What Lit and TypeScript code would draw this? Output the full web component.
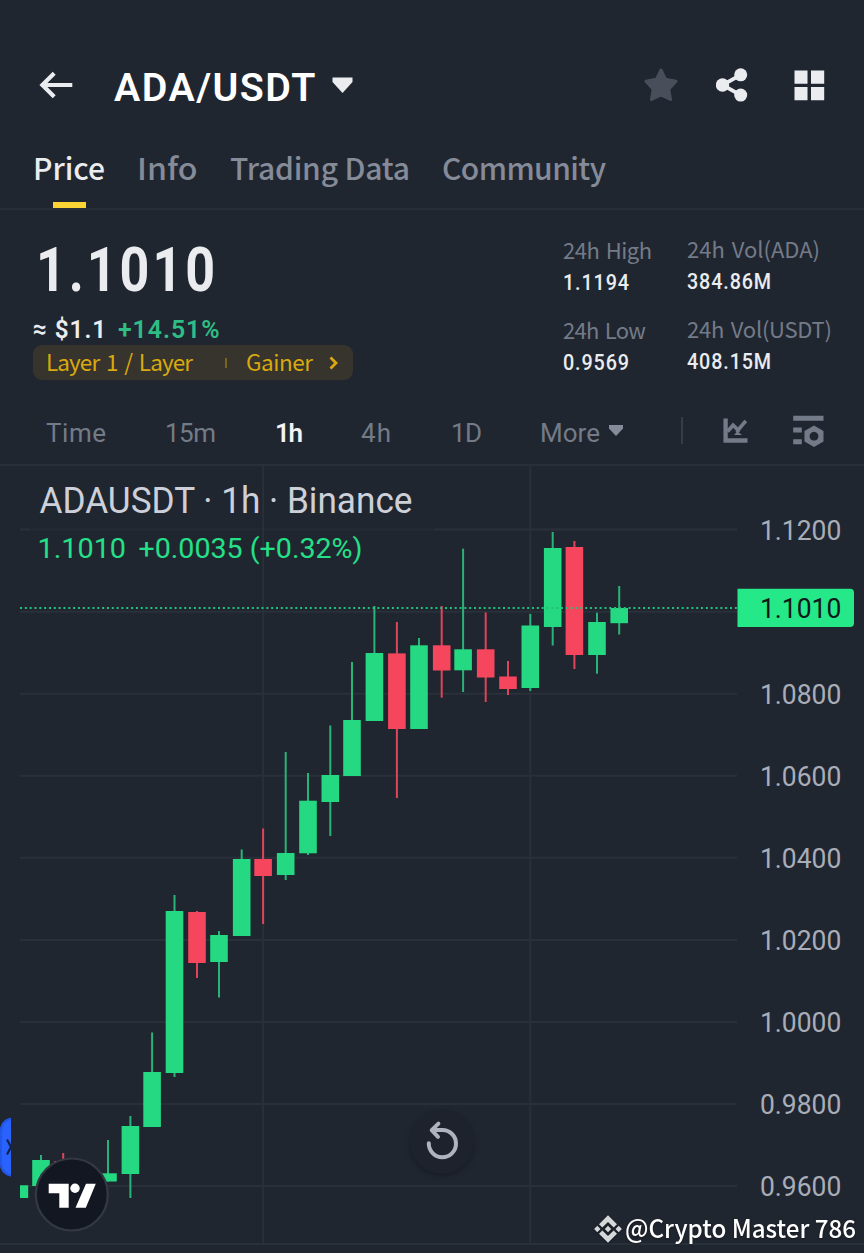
import { LitElement, html, svg, css } from "lit";
import { customElement, property } from "lit/decorators.js";

/** One line of text fitted to an exact advance width. */
@customElement("fit-text")
class FitText extends LitElement {
  @property() text = "";
  @property({ type: Number }) w = 100;
  @property({ type: Number }) h = 30;
  @property({ type: Number }) base = 24;
  @property({ type: Number }) size = 24;
  /** "spacing" keeps glyph shapes, "spacingAndGlyphs" scales them too. */
  @property() mode = "spacing";

  static styles = css`
    :host { display: block; flex: none; }
    svg { display: block; overflow: visible; }
    text { fill: currentColor; white-space: pre; }
  `;

  render() {
    return html`<svg width=${this.w} height=${this.h}>
      <text x="0" y=${this.base} font-size=${this.size} textLength=${this.w} lengthAdjust=${this.mode}>${this.text}</text>
    </svg>`;
  }
}

const UP = "#25d882";
const DOWN = "#f6465d";

// [centre x, body top, body bottom, wick top, wick bottom, falling]
const CANDLES: [number, number, number, number, number, number][] = [
  [19.4, 1185.3, 1198, 1185.3, 1198, 0],
  [41, 1160, 1186, 1155, 1186, 0],
  [63.2, 1161, 1176, 1153, 1180, 1],
  [108, 1173.3, 1181.5, 1140, 1181.5, 0],
  [130.4, 1126, 1174, 1116, 1198, 0],
  [152.1, 1072, 1127, 1032.5, 1127, 0],
  [174.5, 911, 1073, 895, 1077, 0],
  [197, 912, 963, 911, 978, 1],
  [219, 935, 962, 931, 997.5, 0],
  [241.7, 859, 936, 849.5, 936, 0],
  [263.1, 859, 876, 828.5, 924, 1],
  [285.7, 853, 875, 752, 880, 0],
  [308, 800.7, 853.3, 773, 855, 0],
  [330.3, 775, 802, 725.5, 836, 0],
  [352, 720, 776, 662, 776, 0],
  [374.4, 653, 721, 606, 721, 0],
  [396.9, 653.4, 729, 622, 798, 1],
  [419, 645.3, 729, 638, 729, 0],
  [441.7, 645.3, 670.5, 606, 697.7, 1],
  [463.1, 649.3, 670.3, 548.7, 692, 0],
  [485.7, 649.3, 677.5, 612.5, 702, 1],
  [508, 676.5, 689, 661, 695, 1],
  [530.3, 625.5, 688, 614, 691, 0],
  [552.7, 548, 627, 532, 645.5, 0],
  [574.4, 547, 655, 541, 669, 1],
  [597, 622, 655, 612.7, 673.7, 0],
  [619.2, 608, 623.2, 586, 634.5, 0],
];

const TICKS: [string, number][] = [
  ["1.1200", 529.5], ["", 611.7], ["1.0800", 693.8], ["1.0600", 775.8], ["1.0400", 857.8],
  ["1.0200", 940], ["1.0000", 1022], ["0.9800", 1104], ["0.9600", 1186],
];

@customElement("price-chart")
class PriceChart extends LitElement {
  static styles = css`
    :host { display: block; position: relative; height: 787px; }
    .plot { display: block; font-family: Roboto, sans-serif; }
    .grid { stroke: #2a3039; stroke-width: 2; }
    .soft { stroke: #242a34; }
    .title { fill: #cdd0d9; font-size: 36px; }
    .change { fill: #24e089; font-size: 28px; }
    .tick { fill: #a9adb8; font-size: 27px; }
    .now { fill: #10181c; font-size: 27px; }
    .dots { stroke: #25c07b; stroke-width: 2; stroke-dasharray: 2 2.83; }
    .overlay { position: absolute; display: block; }
    .drawer { left: 0; top: 651px; }
    .badge { left: 34px; top: 691px; }
    .reset {
      left: 410px; top: 644px; width: 64px; height: 64px; border-radius: 50%;
      background: #1e222c; box-shadow: 0 2px 5px rgba(10, 13, 22, 0.4);
    }
    .reset svg { display: block; }
    .mark {
      right: 8px; bottom: 7px; display: flex; align-items: center; gap: 3px; color: #fff;
      font-family: "Noto Sans CJK SC", sans-serif; font-weight: 500;
      filter: drop-shadow(0 1px 1px rgba(0, 0, 0, 0.4));
    }
  `;

  private candle([x, top, bottom, high, low, falling]: number[]) {
    return svg`
      <rect x=${x - 1} y=${high} width="2" height=${low - high} fill=${falling ? "#e0445a" : "#2ab377"} />
      <rect x=${x - 8.8} y=${top} width="17.6" height=${bottom - top} fill=${falling ? DOWN : UP} />`;
  }

  render() {
    return html`
      <svg class="plot" width="864" height="787" viewBox="0 466 864 787">
        <defs><clipPath id="area"><rect x="20" y="466" width="717" height="777" /></clipPath></defs>
        ${TICKS.map(([, y], i) => svg`<line class="grid ${i === 0 ? "soft" : ""}" x1="20" x2="737" y1=${y} y2=${y} />`)}
        <path class="grid" d="M435 529.5H737M20 529.5h9" />
        <path class="grid" d="M263.2 466V1243M530.3 466V1243M0 1244H864" />
        <g clip-path="url(#area)">${CANDLES.map((c) => this.candle(c))}</g>
        <line class="dots" x1="20" x2="737" y1="608" y2="608" />
        <text class="title" x="39.5" y="513" textLength="373" lengthAdjust="spacingAndGlyphs">ADAUSDT · 1h · Binance</text>
        <text class="change" x="37.5" y="558" textLength="88.5" lengthAdjust="spacingAndGlyphs">1.1010</text>
        <text class="change" x="138.500" y="558" textLength="224" lengthAdjust="spacingAndGlyphs">+0.0035 (+0.32%)</text>
        ${TICKS.filter(([t]) => t).map(([t, y]) => svg`<text class="tick" x="760" y=${y + 10.4} textLength="81.3" lengthAdjust="spacingAndGlyphs">${t}</text>`)}
        <path fill="#25e889" d="M737.5 588.7H850a4 4 0 0 1 4 4V623a4 4 0 0 1-4 4H737.500Z" />
        <text class="now" x="760" y="617.8" textLength="81.3" lengthAdjust="spacingAndGlyphs">1.1010</text>
      </svg>

      <svg class="overlay drawer" width="11" height="60" viewBox="0 0 11 60">
        <path fill="#2962ff" d="M11 .7Q0 3 0 15V46Q0 57 11 59.500Z" />
        <path fill="none" stroke="#2257e3" stroke-width="2" d="M11 1.700Q1 4 1 15V46Q1 56 11 58.500" />
        <path fill="none" stroke="#14213f" stroke-width="2.200" d="M7 22.500L11 30L7 37.500" />
      </svg>

      <svg class="overlay badge" width="76" height="76" viewBox="34 1157 76 76">
        <circle cx="71.800" cy="1194.500" r="36" fill="#131722" stroke="#343843" stroke-width="2.200" />
        <path fill="#fff" d="M48.700 1183.700H68.700V1207.700H59.300V1193.300H48.700ZM86 1183.700H95.800L85.800 1207.700H75.500Z" />
        <circle cx="75" cy="1188.300" r="4.700" fill="#fff" />
      </svg>

      <div class="overlay reset">
        <svg width="64" height="64" viewBox="410.300 1110 64 64" fill="none" stroke="#afb2bf" stroke-width="4" stroke-linecap="round" stroke-linejoin="round">
          <path d="M429.100 1143.300A13.600 13.600 0 1 0 442.700 1130H432.500M438.700 1123.600L432 1130.200L438.300 1136.800" />
        </svg>
      </div>

      <div class="overlay mark">
        <svg width="28" height="28" viewBox="0 0 28 28" fill="#d6d7d9">
          <path d="M14 .3L23 9.300L19.700 12.600L14 6.900L8.300 12.600L5 9.300ZM14 27.700L23 18.700L19.700 15.400L14 21.100L8.300 15.400L5 18.700ZM14 10.800L17.200 14L14 17.200L10.800 14ZM3.300 10.800L6.500 14L3.300 17.200L.1 14ZM24.700 10.800L27.900 14L24.700 17.200L21.500 14Z" />
        </svg>
        <fit-text text="@Crypto Master 786" mode="spacingAndGlyphs" w="231" h="34" base="25.500" size="25"></fit-text>
      </div>
    `;
  }
}

@customElement("app-root")
class AppRoot extends LitElement {
  static styles = css`
    :host {
      display: block; width: 864px; height: 1253px; overflow: hidden;
      background: #202630; color: #eaecef; font-family: Roboto, sans-serif;
    }
    svg { display: block; flex: none; }
    .head { display: flex; align-items: center; height: 71.500px; padding: 49.500px 39px 0 38px; color: #eaecef; }
    .pair { margin-left: 41px; color: #fff; font-weight: 600; letter-spacing: 1.500px; }
    .caret { margin-left: 15px; }
    .tools { display: flex; align-items: center; margin-left: auto; }
    .share { margin: 0 46px 0 38px; }
    .tabs {
      display: flex; gap: 32px; height: 52px; padding: 35px 0 0 33px; border-bottom: 2px solid #272e37;
      color: #858b98; font-family: "Noto Sans CJK SC", sans-serif;
    }
    .tabs fit-text { font-weight: 500; }
    .active { display: flex; flex-direction: column; align-items: center; color: #eaecef; }
    .bar { width: 33px; height: 7px; margin-top: 16px; background: #fcd535; }
    .summary { display: flex; height: 175px; }
    .quote { width: 530px; padding: 29px 0 0 33px; box-sizing: border-box; }
    .last { margin-left: 2.500px; font-weight: 700; letter-spacing: 3.500px; }
    .sub { display: flex; gap: 11px; margin-top: 14px; font-weight: 600; letter-spacing: 1px; }
    .gain { color: #2ebd85; }
    .tag {
      display: flex; align-items: center; box-sizing: border-box; width: 320px; height: 35px; padding-left: 13px;
      border-radius: 9px; background: #36342c; color: #d9a90f; font-family: "Noto Sans CJK SC", sans-serif;
      word-spacing: 2.500px;
    }
    .split { width: 1.500px; height: 10px; margin: 0 19px 0 32px; background: #79641f; }
    .arrow { margin-left: 15px; }
    .stats { display: flex; }
    .col { display: flex; flex-direction: column; gap: 24px; width: 124px; margin-left: 32.500px; padding-top: 28px; box-sizing: border-box; }
    .col + .col { margin-left: 0; padding-top: 27px; }
    .label { color: #747b88; font-family: "Noto Sans CJK SC", sans-serif; word-spacing: 2px; }
    .num { font-weight: 500; letter-spacing: 1px; }
    .frames {
      display: grid; grid-template-columns: 119px 110px 86px 90px 89px 140.500px 42.500px 70px auto;
      align-items: center; height: 79px; padding: 12px 0 0 46px; box-sizing: border-box; color: #747b88;
    }
    .on { color: #f2f3f5; font-weight: 600; }
    .more { display: flex; align-items: center; gap: 9px; }
    .rule { width: 2px; height: 27px; background: #363d48; margin-bottom: 1px; }
    .tool { margin-top: 1px; }
    .rim { height: 2px; background: #292f38; }
  `;

  private stat(label: string, lw: number, value: string, vw: number) {
    return html`<div>
      <fit-text class="label" text=${label} w=${lw} h="24" base="20.500" size="22"></fit-text>
      <fit-text class="num" text=${value} mode="spacingAndGlyphs" w=${vw} h="32" base="27.500" size="22.500"></fit-text>
    </div>`;
  }

  private frame(text: string, w: number, cls = "") {
    return html`<fit-text class=${cls} text=${text} w=${w} h="32" base="27" size="26"></fit-text>`;
  }

  render() {
    return html`
      <header class="head">
        <svg width="35" height="28" viewBox="38 71.500 35 28" fill="none" stroke="#eaecef" stroke-width="4.200">
          <path d="M42 85.500H72.300M54.200 73.800L42.400 85.500L54.200 97.200" />
        </svg>
        <fit-text class="pair" text="ADA/USDT" mode="spacingAndGlyphs" w="203" h="40" base="35.500" size="39.500"></fit-text>
        <svg class="caret" width="22" height="18" viewBox="0 0 22 18"><path fill="#eaecef" d="M.5 1.500H20.500V6L10.500 17L.5 6Z" /></svg>
        <div class="tools">
          <svg width="34" height="36" viewBox="644 67.500 34 36">
            <path fill="#484f5b" stroke="#484f5b" stroke-width="3" stroke-linejoin="round"
              d="M661 70.500L665.400 79.700L676 81.800L668.800 89.700L670.500 100L661 95.300L651.500 100L653.200 89.700L646 81.800L656.600 79.700Z" />
          </svg>
          <svg class="share" width="32" height="36" viewBox="716 67.500 32 36" fill="#eaecef">
            <circle cx="722.500" cy="85.500" r="6.700" /><circle cx="740.700" cy="75.300" r="6.500" /><circle cx="740.700" cy="95.600" r="6.500" />
            <path stroke="#eaecef" stroke-width="3.800" fill="none" d="M740.700 75.300L722.500 85.500L740.700 95.600" />
          </svg>
          <svg width="31" height="31" viewBox="0 0 31 31"><path fill="#eaecef" d="M.5 .5H13.500V13.700H.5ZM17 .5H30.200V13.700H17ZM.5 17H13.500V30.200H.5ZM17 17H30.200V30.200H17Z" /></svg>
        </div>
      </header>

      <nav class="tabs">
        <div class="active">
          <fit-text text="Price" w="72" h="30" base="24" size="30"></fit-text>
          <div class="bar"></div>
        </div>
        <fit-text text="Info" mode="spacingAndGlyphs" w="60.500" h="30" base="24" size="30"></fit-text>
        <fit-text text="Trading Data" w="180" h="30" base="24" size="30"></fit-text>
        <fit-text text="Community" w="164" h="30" base="24" size="30"></fit-text>
      </nav>

      <section class="summary">
        <div class="quote">
          <fit-text class="last" text="1.1010" mode="spacingAndGlyphs" w="182" h="60" base="52" size="62"></fit-text>
          <div class="sub">
            <fit-text text="≈ $1.1" mode="spacingAndGlyphs" w="74" h="32" base="25" size="26.500"></fit-text>
            <fit-text class="gain" text="+14.51%" mode="spacingAndGlyphs" w="102.500" h="32" base="25" size="26.500"></fit-text>
          </div>
          <div class="tag">
            <fit-text text="Layer 1 / Layer" w="147" h="30" base="23" size="22.500"></fit-text>
            <div class="split"></div>
            <fit-text text="Gainer" w="67" h="30" base="23" size="22.500"></fit-text>
            <svg class="arrow" width="12" height="14" viewBox="0 0 12 14"><path fill="none" stroke="#d9a90f" stroke-width="2.800" d="M2.500 1.500L8 7L2.500 12.500" /></svg>
          </div>
        </div>
        <div class="stats">
          <div class="col">${this.stat("24h High", 89, "1.1194", 67)}${this.stat("24h Low", 83, "0.9569", 67)}</div>
          <div class="col">${this.stat("24h Vol(ADA)", 133, "384.86M", 85)}${this.stat("24h Vol(USDT)", 145, "408.15M", 85)}</div>
        </div>
      </section>

      <nav class="frames">
        ${this.frame("Time", 60)}${this.frame("15m", 51)}${this.frame("1h", 28, "on")}${this.frame("4h", 30)}${this.frame("1D", 31)}
        <div class="more">
          ${this.frame("More", 60)}
          <svg width="14" height="12" viewBox="0 0 14 12"><path fill="#858b98" d="M0 0H14V3.500L7 11L0 3.500Z" /></svg>
        </div>
        <div class="rule"></div>
        <svg class="tool" width="25" height="31" viewBox="723.500 416 25 31" fill="none" stroke="#747b88">
          <path stroke-width="4.300" d="M726.100 418.500V440.500H748" />
          <path stroke-width="3.600" d="M728 431.500L733.600 425.200L738.600 430L746.300 420.800" />
          <path fill="#747b88" stroke="none" d="M738 428.500L740.500 431.500L739 432.300L742.500 435H734.500L737 432.300L736 431.500Z" />
        </svg>
        <svg class="tool" width="31" height="32" viewBox="793.500 415.500 31 32" fill="#747b88">
          <path d="M793.700 416.300H824V421.300H793.700ZM793.700 428H802.300V433H793.700ZM793.700 439.700H802.300V444.700H793.700Z" />
          <path fill-rule="evenodd" d="M814.500 426L824 431.500V442L814.500 447.500L805 442V431.500ZM814.500 432.300a4.400 4.400 0 1 0 .01 0Z" />
        </svg>
      </nav>
      <div class="rim"></div>
      <price-chart></price-chart>
    `;
  }
}
